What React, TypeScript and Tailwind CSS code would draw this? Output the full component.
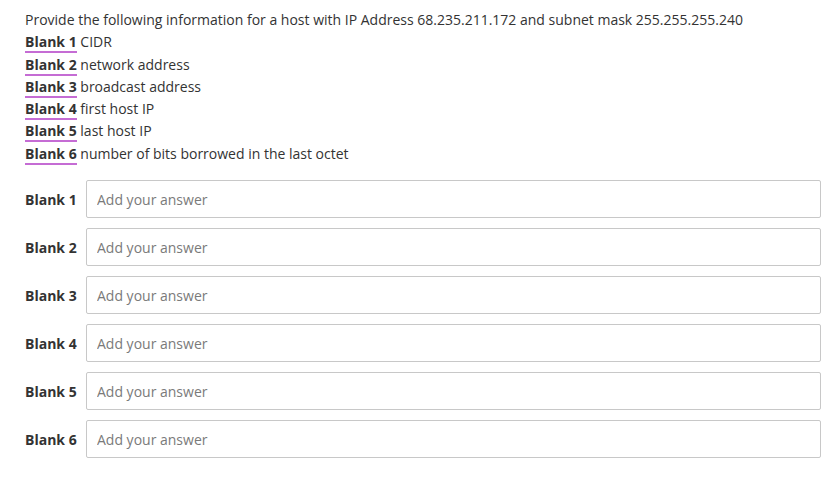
import React from "react";

const items = [
  ["Blank 1", "CIDR"],
  ["Blank 2", "network address"],
  ["Blank 3", "broadcast address"],
  ["Blank 4", "first host IP"],
  ["Blank 5", "last host IP"],
  ["Blank 6", "number of bits borrowed in the last octet"],
];

export default function App() {
  return (
    <div
      className="w-[827px] h-[480px] bg-white text-[#333333] text-[14px]"
      style={{ fontFamily: '"Open Sans", "Noto Sans", sans-serif' }}
    >
      <div className="pl-[25px] pt-[9px] leading-[22.3px]">
        <div>Provide the following information for a host with IP Address 68.235.211.172 and subnet mask 255.255.255.240</div>
        {items.map(([b, t]) => (
          <div key={b}>
            <span className="font-bold border-b-2 border-[#c56cd4]">{b}</span> {t}
          </div>
        ))}
      </div>
      <div className="mt-[15px] flex flex-col gap-[10px] pl-[25px] pr-[6px]">
        {items.map(([b]) => (
          <div key={b} className="flex items-center">
            <div className="w-[61px] font-bold text-[14px]">{b}</div>
            <input
              className="flex-1 h-[38px] border border-[#c8c8c8] rounded-[2px] px-[10px] text-[14px] placeholder-[#7a7a7a] outline-none"
              placeholder="Add your answer"
              style={{ fontFamily: '"Open Sans", "Noto Sans", sans-serif' }}
            />
          </div>
        ))}
      </div>
    </div>
  );
}
